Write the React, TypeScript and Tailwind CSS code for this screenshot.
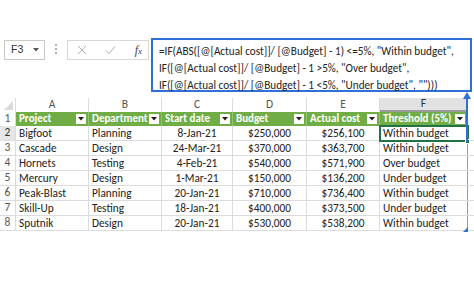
import React from "react";

const cols = [
  { l: "A", w: 73, h: "Project", center: false },
  { l: "B", w: 73, h: "Department", center: false },
  { l: "C", w: 71, h: "Start date", center: true },
  { l: "D", w: 74, h: "Budget", center: true },
  { l: "E", w: 73, h: "Actual cost", center: true },
  { l: "F", w: 88, h: "Threshold (5%)", center: false },
];

const rows = [
  ["Bigfoot", "Planning", "8-Jan-21", "$250,000", "$256,100", "Within budget"],
  ["Cascade", "Design", "24-Mar-21", "$370,000", "$363,700", "Within budget"],
  ["Hornets", "Testing", "4-Feb-21", "$540,000", "$571,900", "Over budget"],
  ["Mercury", "Design", "1-Mar-21", "$150,000", "$136,200", "Under budget"],
  ["Peak-Blast", "Planning", "20-Jan-21", "$710,000", "$736,400", "Within budget"],
  ["Skill-Up", "Testing", "18-Jan-21", "$400,000", "$373,500", "Under budget"],
  ["Sputnik", "Design", "20-Jan-21", "$530,000", "$538,200", "Within budget"],
];

function DropBtn() {
  return (
    <div className="w-[10px] h-[10px] bg-white flex items-center justify-center shrink-0">
      <svg width="6" height="4" viewBox="0 0 6 4">
        <path d="M0 0 L6 0 L3 3.5 Z" fill="#222" />
      </svg>
    </div>
  );
}

export default function App() {
  return (
    <div className="w-[474px] h-[283px] bg-white relative overflow-hidden font-['Carlito','Liberation_Sans',sans-serif]">
      {/* formula bar */}
      <div className="flex items-start pt-[38px] pl-[4px] h-[96px]">
        <div className="mt-[2px] w-[41px] h-[20px] border border-[#c8c8c8] flex items-center justify-between pl-[6px] pr-[5px] font-['Liberation_Sans',sans-serif]">
          <span className="text-[10.5px] text-[#333]">F3</span>
          <svg width="6" height="4" viewBox="0 0 6 4">
            <path d="M0 0 L6 0 L3 3.5 Z" fill="#555" />
          </svg>
        </div>
        <div className="mt-[5px] w-[22px] flex flex-col items-center gap-[2px] pt-[1px]">
          <div className="w-[2px] h-[2px] bg-[#b0b0b0]" />
          <div className="w-[2px] h-[2px] bg-[#b0b0b0]" />
          <div className="w-[2px] h-[2px] bg-[#b0b0b0]" />
        </div>
        <div className="mt-[2px] w-[82px] h-[20px] border border-[#d8d8d8] flex items-center justify-between pl-[9px] pr-[6px]">
          <svg width="10" height="10" viewBox="0 0 10 10">
            <path d="M1 1 L9 9 M9 1 L1 9" stroke="#b0b0b0" strokeWidth="1" />
          </svg>
          <svg width="11" height="10" viewBox="0 0 11 10">
            <path d="M1 5.5 L4 8.5 L10 1.5" stroke="#b0b0b0" strokeWidth="1" fill="none" />
          </svg>
          <span className="text-[12px] italic text-[#444] font-['Liberation_Serif',serif]">
            f<span className="text-[9px]">x</span>
          </span>
        </div>
        <div className="ml-[2px] w-[321px] h-[54px] border-2 border-[#2e6fd8] pl-[6px] pt-[3px] text-[11.2px] leading-[16.8px] text-[#222] whitespace-nowrap">
          <div>=IF(ABS([@[Actual cost]]/ [@Budget] - 1) &lt;=5%, "Within budget",</div>
          <div>IF([@[Actual cost]]/ [@Budget] - 1 &gt;5%, "Over budget",</div>
          <div>IF([@[Actual cost]]/ [@Budget] - 1 &lt;5%, "Under budget", ""))) </div>
        </div>
      </div>

      {/* grid */}
      <div className="relative mt-[2px]">
        {/* column letters */}
        <div className="flex h-[14px]">
          <div className="w-[16px] h-full relative border-r border-[#dcdcdc]">
            <svg className="absolute right-[2px] bottom-[2px]" width="9" height="9" viewBox="0 0 9 9">
              <path d="M9 0 L9 9 L0 9 Z" fill="#dadada" />
            </svg>
          </div>
          {cols.map((c) => (
            <div
              key={c.l}
              className={
                "h-full flex items-center justify-center text-[11.5px] border-r border-[#dcdcdc] " +
                (c.l === "F" ? "bg-[#e2e2e2] border-b-2 border-b-[#9a9a9a] text-[#333]" : "text-[#555]")
              }
              style={{ width: c.w }}
            >
              {c.l}
            </div>
          ))}
        </div>
        {/* header row */}
        <div className="flex h-[14px]">
          <div className="w-[16px] h-full flex items-center justify-center text-[11.5px] text-[#555] border-r border-[#dcdcdc]">1</div>
          {cols.map((c) => (
            <div
              key={c.l}
              className="h-full bg-[#70ad47] flex items-center justify-between pl-[3px] pr-[2px] border-r border-[#8fc46a] text-white font-bold text-[11px]"
              style={{ width: c.w }}
            >
              <span>{c.h}</span>
              <DropBtn />
            </div>
          ))}
        </div>
        {/* data rows */}
        {rows.map((r, i) => (
          <div key={i} className="flex h-[15px] border-b border-[#dcdcdc]">
            <div
              className={
                "w-[16px] h-full flex items-center justify-center text-[11.5px] border-r border-[#dcdcdc] " +
                (i === 0 ? "bg-[#e6e6e6] text-[#333]" : "text-[#555]")
              }
            >
              {i + 2}
            </div>
            {r.map((v, j) => (
              <div
                key={j}
                className={
                  "h-full flex items-center px-[3px] text-[11.3px] text-[#222] border-r " +
                  (j === 5 ? "border-[#9a9a9a] " : "border-[#dcdcdc] ") +
                  (cols[j].center ? "justify-center" : "justify-start")
                }
                style={{ width: cols[j].w }}
              >
                {v}
              </div>
            ))}
          </div>
        ))}

        {/* selection F2 */}
        <div className="absolute left-[379px] top-[27px] w-[90px] h-[17px] border-2 border-[#217346]" />
        <div className="absolute left-[465px] top-[41px] w-[5px] h-[5px] bg-[#217346] border border-white" />
        {/* resize handle */}
        <svg className="absolute left-[463px] top-[129px]" width="5" height="5" viewBox="0 0 5 5">
          <path d="M5 0 L5 5 L0 5 Z" fill="#2e6fd8" />
        </svg>
      </div>

      {/* blue arrow */}
      <svg className="absolute left-[462px] top-[92px]" width="10" height="50" viewBox="0 0 10 50">
        <path d="M5 4 L5 50" stroke="#2e6fd8" strokeWidth="2" />
        <path d="M5 0 L9 7 L1 7 Z" fill="#2e6fd8" />
      </svg>
    </div>
  );
}
